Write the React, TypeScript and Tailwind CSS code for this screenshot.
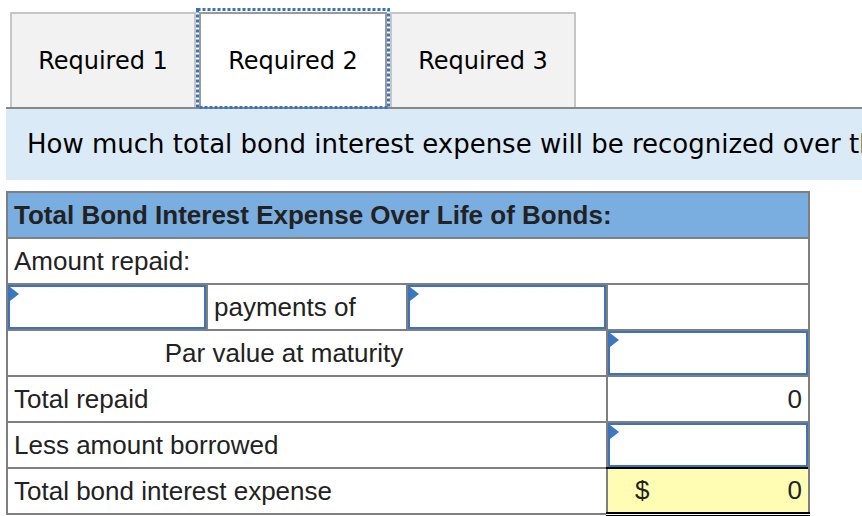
import React from "react";

const cell = "border-2 border-[#7f7f7f] p-0 align-middle";

// Blue-bordered entry box with the little flag in the top-left corner
function EntryBox() {
  return (
    <div className="relative h-full w-full border-2 border-[#3b74ba] bg-white">
      <span className="absolute left-0 top-0 h-0 w-0 border-y-[7px] border-l-[9px] border-y-transparent border-l-[#3b78c0]" />
    </div>
  );
}

function Tab({ label, active }: { label: string; active?: boolean }) {
  if (active) {
    return (
      <div className="relative z-10 ml-[3px] flex h-[95px] w-[188px] items-center justify-center border-2 border-b-0 border-[#9a9a9a] bg-white">
        {label}
        {/* focus ring: square blue dots */}
        <svg className="pointer-events-none absolute -left-[5px] -top-[6px] h-[101px] w-[194px]" viewBox="0 0 194 101" fill="none" aria-hidden="true">
          <rect x="1.5" y="1.5" width="191" height="98" stroke="#3a72c0" strokeWidth="3" strokeDasharray="3 2" />
        </svg>
      </div>
    );
  }
  return (
    <div className="ml-[3px] flex h-[95px] w-[186px] items-center justify-center border-2 border-b-0 border-[#c6c6c6] bg-[#f2f2f2] first:ml-0">
      {label}
    </div>
  );
}

export default function App() {
  return (
    <div className="h-screen w-full overflow-hidden bg-white pt-[12px]">
      <div className="flex pl-[10px] font-['DejaVu_Sans',Verdana,sans-serif] text-[24px] text-black">
        <Tab label="Required 1" />
        <Tab label="Required 2" active />
        <Tab label="Required 3" />
      </div>

      <div className="ml-[6px] flex h-[73px] items-center whitespace-nowrap border-t-2 border-[#888] bg-[#dbeaf7] pl-[21px] font-['DejaVu_Sans',Verdana,sans-serif] text-[26px] text-black">
        How much total bond interest expense will be recognized over the life of the bonds?
      </div>

      <table className="ml-[6px] mt-[11px] w-[802px] table-fixed border-collapse font-['Liberation_Sans',Arial,sans-serif] text-[26px] text-[#222]">
        <colgroup>
          <col className="w-[200px]" />
          <col className="w-[200px]" />
          <col className="w-[200px]" />
          <col className="w-[202px]" />
        </colgroup>
        <tbody>
          <tr className="h-[46px]">
            <td colSpan={4} className={`${cell} bg-[#7aaee1] pl-[6px] font-bold`}>
              Total Bond Interest Expense Over Life of Bonds:
            </td>
          </tr>
          <tr className="h-[46px]">
            <td colSpan={4} className={`${cell} pl-[6px]`}>
              Amount repaid:
            </td>
          </tr>
          <tr className="h-[46px]">
            <td className={`${cell} h-[46px]`}>
              <EntryBox />
            </td>
            <td className={`${cell} pl-[6px]`}>payments of</td>
            <td className={`${cell} h-[46px]`}>
              <EntryBox />
            </td>
            <td className={cell}></td>
          </tr>
          <tr className="h-[46px]">
            <td colSpan={3} className={`${cell} pr-[46px] text-center`}>
              Par value at maturity
            </td>
            <td className={`${cell} h-[46px]`}>
              <EntryBox />
            </td>
          </tr>
          <tr className="h-[46px]">
            <td colSpan={3} className={`${cell} pl-[6px]`}>
              Total repaid
            </td>
            <td className={`${cell} border-t-black pr-[6px] text-right`}>0</td>
          </tr>
          <tr className="h-[46px]">
            <td colSpan={3} className={`${cell} pl-[6px]`}>
              Less amount borrowed
            </td>
            <td className={`${cell} h-[46px]`}>
              <EntryBox />
            </td>
          </tr>
          <tr className="h-[46px]">
            <td colSpan={3} className={`${cell} pl-[6px]`}>
              Total bond interest expense
            </td>
            <td className={`${cell} border-t-black border-b-[5px] border-b-black border-double bg-[#fffdb4] pr-[6px]`}>
              <div className="flex items-center justify-between pl-[27px]">
                <span>$</span>
                <span>0</span>
              </div>
            </td>
          </tr>
        </tbody>
      </table>
    </div>
  );
}
